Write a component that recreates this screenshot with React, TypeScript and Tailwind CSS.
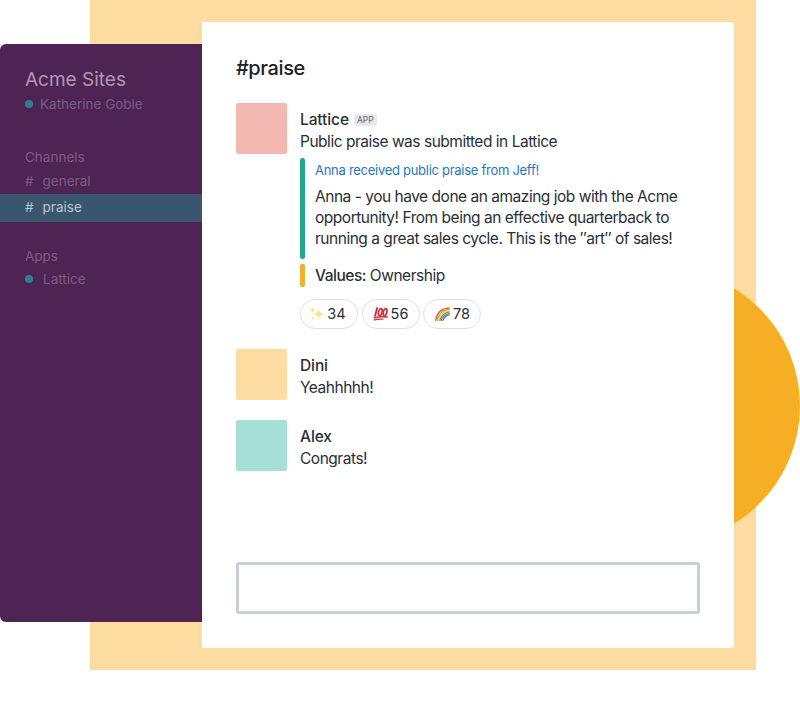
import React from "react";

const Sparkles = () => (
  <svg width="16" height="16" viewBox="0 0 18 18" className="shrink-0">
    <path d="M11 2 C11.6 6.5 12.5 7.8 17 9 C12.5 10.2 11.6 11.5 11 16 C10.4 11.5 9.5 10.2 5 9 C9.5 7.8 10.4 6.5 11 2Z" fill="#fbe58c" />
    <path d="M4 1.5 C4.3 3.6 4.8 4.1 6.8 4.5 C4.8 4.9 4.3 5.4 4 7.5 C3.7 5.4 3.2 4.9 1.2 4.5 C3.2 4.1 3.7 3.6 4 1.5Z" fill="#fcd66a" />
    <path d="M4 11.5 C4.2 13 4.6 13.4 6 13.7 C4.6 14 4.2 14.4 4 16 C3.8 14.4 3.4 14 2 13.7 C3.4 13.4 3.8 13 4 11.5Z" fill="#fbe58c" />
  </svg>
);

const Hundred = () => (
  <svg width="16" height="16" viewBox="0 0 18 18" className="shrink-0" fill="none" stroke="#c9303a">
    <path d="M4.6 2.5 L2.4 11" strokeWidth="2.2" strokeLinecap="round" />
    <ellipse cx="8.2" cy="6.8" rx="1.9" ry="4" transform="rotate(14 8.2 6.8)" strokeWidth="1.9" />
    <ellipse cx="13.6" cy="6.8" rx="1.9" ry="4" transform="rotate(14 13.6 6.8)" strokeWidth="1.9" />
    <path d="M1.5 13.2 C6 12.2 11 12 16 12.4" strokeWidth="1.7" strokeLinecap="round" />
    <path d="M1.5 15.6 C5 14.8 8 14.6 11 14.8" strokeWidth="1.5" strokeLinecap="round" />
  </svg>
);

const Rainbow = () => (
  <svg width="17" height="16" viewBox="0 0 20 18" className="shrink-0" fill="none" strokeWidth="1.5">
    <path d="M2 17 C3 8 9 2.5 18.5 1.8" stroke="#e2483f" />
    <path d="M3.6 17 C4.6 9.4 10 4 18.5 3.4" stroke="#f29a2e" />
    <path d="M5.2 17 C6.2 10.8 11 5.6 18.5 5" stroke="#f7d84a" />
    <path d="M6.8 17 C7.8 12.2 12 7.2 18.5 6.6" stroke="#5bb14a" />
    <path d="M8.4 17 C9.4 13.6 13 8.8 18.5 8.2" stroke="#3f8fd8" />
    <path d="M10 17 C11 15 14 10.4 18.5 9.8" stroke="#7a56b8" />
  </svg>
);

function Dot() {
  return <span className="h-2 w-2 shrink-0 rounded-full bg-[#2e7f8c]" />;
}

function Reaction({ icon, count, className }: { icon: React.ReactNode; count: string; className?: string }) {
  return (
    <div className={`flex h-[30px] w-[58px] items-center justify-center gap-[2px] rounded-full border border-[#dfe0e2] text-[14.5px] text-[#2a2f36] ${className ?? ""}`}>
      {icon}
      <span>{count}</span>
    </div>
  );
}

function Message({ color, name, text, className }: { color: string; name: string; text: string; className?: string }) {
  return (
    <div className={`flex gap-[13px] ${className ?? ""}`}>
      <div className={`h-[51px] w-[51px] shrink-0 rounded-[2px] ${color}`} />
      <div className="pt-[6px] text-[15.5px] tracking-[-0.48px] text-[#2a2f36]">
        <div className="font-[450] leading-[22px] tracking-[-0.1px]">{name}</div>
        <div className="leading-[21px]">{text}</div>
      </div>
    </div>
  );
}

export default function App() {
  return (
    <div className="relative h-[725px] w-[800px] overflow-hidden bg-white font-['Inter',sans-serif]">
      <div className="absolute left-[90px] top-0 h-[670px] w-[666px] bg-[#fcdca0]" />
      <div className="absolute left-[524px] top-[268px] h-[276px] w-[276px] rounded-full bg-[#f6ae25]" />

      <div className="relative flex items-start">
        <aside className="mt-[44px] h-[578px] w-[202px] shrink-0 rounded-l-[6px] bg-[#4d2453] pt-[23px]">
          <div className="px-[25px] text-[19px] leading-[26px] text-[#b394b8]">Acme Sites</div>
          <div className="mt-[1px] flex items-center gap-[7px] px-[25px] text-[13.5px] leading-[20px] text-[#7d5b85]">
            <Dot />
            <span>Katherine Goble</span>
          </div>
          <div className="mt-[33px] px-[25px] text-[13.5px] leading-[20px] text-[#7d5b85]">Channels</div>
          <div className="mt-[1px] flex h-[26px] items-center gap-[9px] px-[25px] text-[13.5px] text-[#7d5b85]">
            <span>#</span>
            <span>general</span>
          </div>
          <div className="flex h-[28px] items-center gap-[9px] bg-[#3a566f] px-[25px] pb-[1px] text-[13.5px] text-[#b8c4d2]">
            <span>#</span>
            <span>praise</span>
          </div>
          <div className="mt-[24px] px-[25px] text-[13.5px] leading-[20px] text-[#7d5b85]">Apps</div>
          <div className="flex h-[26px] items-center gap-[10px] px-[25px] text-[13.5px] text-[#7d5b85]">
            <Dot />
            <span>Lattice</span>
          </div>
        </aside>

        <main className="mt-[22px] h-[626px] w-[532px] shrink-0 rounded-r-[4px] bg-white px-[34px] pt-[32px]">
          <h1 className="text-[20px] font-[450] leading-[28px] tracking-[-0.4px] text-[#1d2026]">#praise</h1>

          <div className="mt-[21px] flex gap-[13px]">
            <div className="h-[51px] w-[51px] shrink-0 rounded-[2px] bg-[#f4b8b2]" />
            <div className="min-w-0 flex-1 pt-[6px] text-[15.5px] tracking-[-0.48px] text-[#2a2f36]">
              <div className="flex items-center gap-[5px] leading-[22px]">
                <span className="font-[450] tracking-[-0.1px]">Lattice</span>
                <span className="rounded-[2px] bg-[#e8e8e8] px-[3px] text-[8.5px] leading-[12px] tracking-normal text-[#606468]">APP</span>
              </div>
              <div className="leading-[21px]">Public praise was submitted in Lattice</div>

              <div className="mt-[6px] flex gap-[10px]">
                <div className="w-[5px] shrink-0 rounded-full bg-[#22a78f]" />
                <div className="pb-[10px]">
                  <div className="text-[13px] leading-[24px] tracking-[-0.28px] text-[#1f78bd]">Anna received public praise from Jeff!</div>
                  <p className="mt-[4px] w-[380px] leading-[21px]">
                    Anna - you have done an amazing job with the Acme opportunity! From being an effective quarterback to running a great sales cycle. This is the ″art″ of sales!
                  </p>
                </div>
              </div>

              <div className="mt-[5px] flex items-center gap-[10px]">
                <div className="h-[23px] w-[5px] shrink-0 rounded-[2px] bg-[#f0b02c]" />
                <div className="leading-[23px]"><span className="font-[500]">Values:</span> Ownership</div>
              </div>

              <div className="mt-[12px] flex gap-[3.5px] tracking-normal">
                <Reaction className="pr-[3px]" icon={<Sparkles />} count="34" />
                <Reaction icon={<Hundred />} count="56" />
                <Reaction icon={<Rainbow />} count="78" />
              </div>
            </div>
          </div>

          <Message className="mt-[20px]" color="bg-[#fcdca0]" name="Dini" text="Yeahhhhh!" />
          <Message className="mt-[20px]" color="bg-[#a6dfd3]" name="Alex" text="Congrats!" />

          <div className="mt-[91px] h-[52px] w-[464px] rounded-[3px] border-[3px] border-[#c8d0d8] bg-white" />
        </main>
      </div>
    </div>
  );
}
